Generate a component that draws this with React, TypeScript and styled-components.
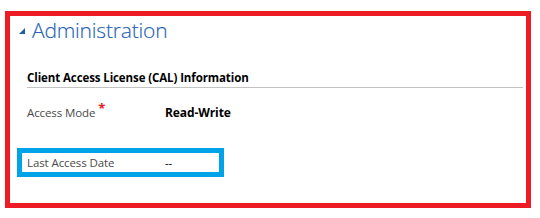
import React from "react";
import styled, { createGlobalStyle } from "styled-components";

const Global = createGlobalStyle`
  html, body { margin: 0; padding: 0; background: #ffffff; }
  body { font-family: "Segoe UI", "Open Sans", "Noto Sans", sans-serif; }
  * { box-sizing: border-box; }
`;

const Frame = styled.section`
  margin: 11px 0 0 5px;
  width: 526px;
  height: 197px;
  border: 5px solid #ed1c24;
  display: flex;
  flex-direction: column;
`;

const Header = styled.div`
  display: flex;
  align-items: center;
  gap: 7px;
  padding: 1px 0 0 9px;
  height: 26px;
`;

const Caret = styled.span`
  width: 0;
  height: 0;
  border-left: 6px solid transparent;
  border-bottom: 6px solid #1d5fa6;
  margin-top: 2px;
`;

const Title = styled.h2`
  margin: 0;
  font-family: "Open Sans", sans-serif;
  font-weight: 300;
  font-size: 21px;
  color: #2563b6;
  letter-spacing: -0.2px;
  -webkit-text-stroke: 0.15px #2563b6;
`;

const Body = styled.div`
  padding: 28px 3px 0 17px;
  display: flex;
  flex-direction: column;
`;

const SectionTitle = styled.h3`
  margin: 0;
  font-family: "Open Sans", sans-serif;
  font-weight: 700;
  font-size: 11.5px;
  color: #000;
  line-height: 15px;
  padding-bottom: 2px;
  border-bottom: 1px solid #c3c3c3;
  letter-spacing: -0.1px;
`;

const Row = styled.div<{ $highlight?: boolean }>`
  display: grid;
  grid-template-columns: 138px 1fr;
  align-items: center;
  height: ${(p) => (p.$highlight ? "29px" : "20px")};
  ${(p) =>
    p.$highlight
      ? `
    width: 207px;
    margin-left: -10px;
    padding-left: 5px;
    border: 5px solid #00a2e8;
  `
      : ""}
`;

const Label = styled.span`
  font-family: "Open Sans", sans-serif;
  font-size: 11.5px;
  color: #4a4a4a;
  letter-spacing: -0.1px;
`;

const Required = styled.sup`
  color: #e8161b;
  font-size: 13px;
  font-weight: 700;
  margin-left: 3px;
  vertical-align: 0;
  position: relative;
  top: -4px;
`;

const Value = styled.span<{ $strong?: boolean }>`
  font-family: "Open Sans", sans-serif;
  font-size: ${(p) => (p.$strong ? "12px" : "11.5px")};
  font-weight: ${(p) => (p.$strong ? 700 : 400)};
  color: #000;
  letter-spacing: -0.1px;
`;

const Rows = styled.div`
  display: flex;
  flex-direction: column;
  gap: 26px;
  margin-top: 14px;
`;

export default function App() {
  return (
    <>
      <Global />
      <Frame>
        <Header>
          <Caret />
          <Title>Administration</Title>
        </Header>
        <Body>
          <SectionTitle>Client Access License (CAL) Information</SectionTitle>
          <Rows>
            <Row>
              <Label>
                Access Mode<Required>*</Required>
              </Label>
              <Value $strong>Read-Write</Value>
            </Row>
            <Row $highlight>
              <Label>Last Access Date</Label>
              <Value>--</Value>
            </Row>
          </Rows>
        </Body>
      </Frame>
    </>
  );
}
